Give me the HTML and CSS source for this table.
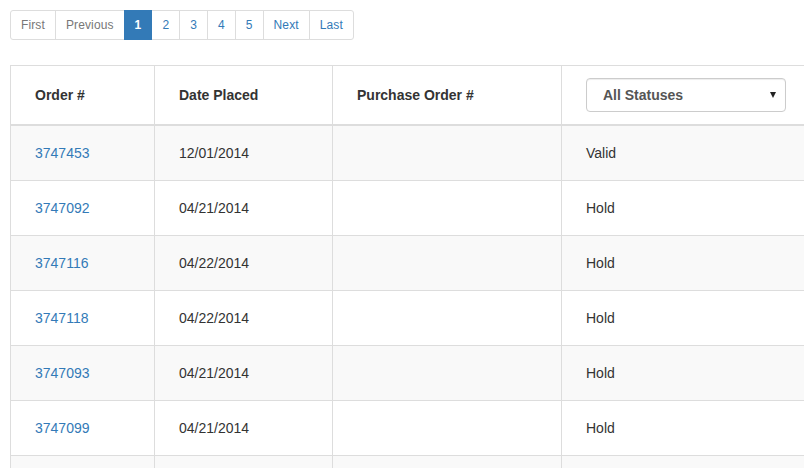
FILE: index.html
```html
<!DOCTYPE html>
<html>
<head>
<meta charset="utf-8">
<link rel="stylesheet" href="styles.css">
</head>
<body>
<div class="page">
  <ul class="pagination">
    <li class="disabled"><span>First</span></li>
    <li class="disabled"><span>Previous</span></li>
    <li class="active"><span>1</span></li>
    <li><a href="#">2</a></li>
    <li><a href="#">3</a></li>
    <li><a href="#">4</a></li>
    <li><a href="#">5</a></li>
    <li><a href="#">Next</a></li>
    <li><a href="#">Last</a></li>
  </ul>
  <table class="orders">
    <colgroup>
      <col class="c1"><col class="c2"><col class="c3"><col class="c4">
    </colgroup>
    <thead>
      <tr>
        <th>Order #</th>
        <th>Date Placed</th>
        <th>Purchase Order #</th>
        <th>
          <div class="select-wrap">
            <select class="status-select">
              <option>All Statuses</option>
              <option>Valid</option>
              <option>Hold</option>
            </select>
            <span class="caret"></span>
          </div>
        </th>
      </tr>
    </thead>
    <tbody>
      <tr><td><a href="#">3747453</a></td><td>12/01/2014</td><td></td><td>Valid</td></tr>
      <tr><td><a href="#">3747092</a></td><td>04/21/2014</td><td></td><td>Hold</td></tr>
      <tr><td><a href="#">3747116</a></td><td>04/22/2014</td><td></td><td>Hold</td></tr>
      <tr><td><a href="#">3747118</a></td><td>04/22/2014</td><td></td><td>Hold</td></tr>
      <tr><td><a href="#">3747093</a></td><td>04/21/2014</td><td></td><td>Hold</td></tr>
      <tr><td><a href="#">3747099</a></td><td>04/21/2014</td><td></td><td>Hold</td></tr>
      <tr><td><a href="#">3747100</a></td><td>04/21/2014</td><td></td><td>Hold</td></tr>
    </tbody>
  </table>
</div>
</body>
</html>
```

FILE: styles.css
```css
html, body {
  margin: 0;
  padding: 0;
  overflow: hidden;
  background: #fff;
}
body {
  font-family: "Liberation Sans", Arial, Helvetica, sans-serif;
  font-size: 14px;
  line-height: 20px;
  color: #333;
}
.page {
  padding: 10px;
}
.pagination {
  display: flex;
  list-style: none;
  margin: 0 0 25px 0;
  padding: 0;
}
.pagination li > a,
.pagination li > span {
  display: block;
  padding: 5px 10px;
  font-size: 12px;
  line-height: 18px;
  letter-spacing: 0.12px;
  border: 1px solid #ddd;
  margin-left: -1px;
  background: #fff;
  color: #337ab7;
  text-decoration: none;
}
.pagination li:first-child > span {
  margin-left: 0;
  border-radius: 3px 0 0 3px;
}
.pagination li:last-child > a {
  border-radius: 0 3px 3px 0;
}
.pagination li.disabled > span {
  color: #777;
}
.pagination li.active > span {
  background: #337ab7;
  border-color: #337ab7;
  color: #fff;
  font-weight: bold;
  position: relative;
  z-index: 2;
}
.orders {
  border-collapse: collapse;
  border-spacing: 0;
  border: 1px solid #ddd;
  table-layout: fixed;
  width: 820px;
}
.c1 { width: 144px; }
.c2 { width: 178px; }
.c3 { width: 229px; }
.c4 { width: 269px; }
.orders th,
.orders td {
  border: 1px solid #ddd;
  padding: 17px 24px;
  text-align: left;
  vertical-align: middle;
  line-height: 20px;
}
.orders th {
  padding-top: 12px;
  padding-bottom: 12px;
  font-weight: bold;
  border-bottom: 2px solid #ddd;
  border-top: 0;
}
.orders tbody tr:nth-child(odd) td {
  background: #f9f9f9;
}
.orders a {
  color: #337ab7;
  text-decoration: none;
}
.select-wrap {
  position: relative;
  width: 200px;
}
.status-select {
  display: block;
  width: 200px;
  height: 34px;
  padding: 0 16px;
  font-family: "Liberation Sans", Arial, Helvetica, sans-serif;
  font-size: 14px;
  font-weight: bold;
  color: #555;
  background: #fff;
  border: 1px solid #ccc;
  border-radius: 4px;
  box-shadow: inset 0 1px 1px rgba(0,0,0,0.075);
  -webkit-appearance: none;
  appearance: none;
}
.caret {
  position: absolute;
  right: 10px;
  top: 14px;
  width: 0;
  height: 0;
  border-left: 3px solid transparent;
  border-right: 3px solid transparent;
  border-top: 6px solid #222;
  pointer-events: none;
}
```
